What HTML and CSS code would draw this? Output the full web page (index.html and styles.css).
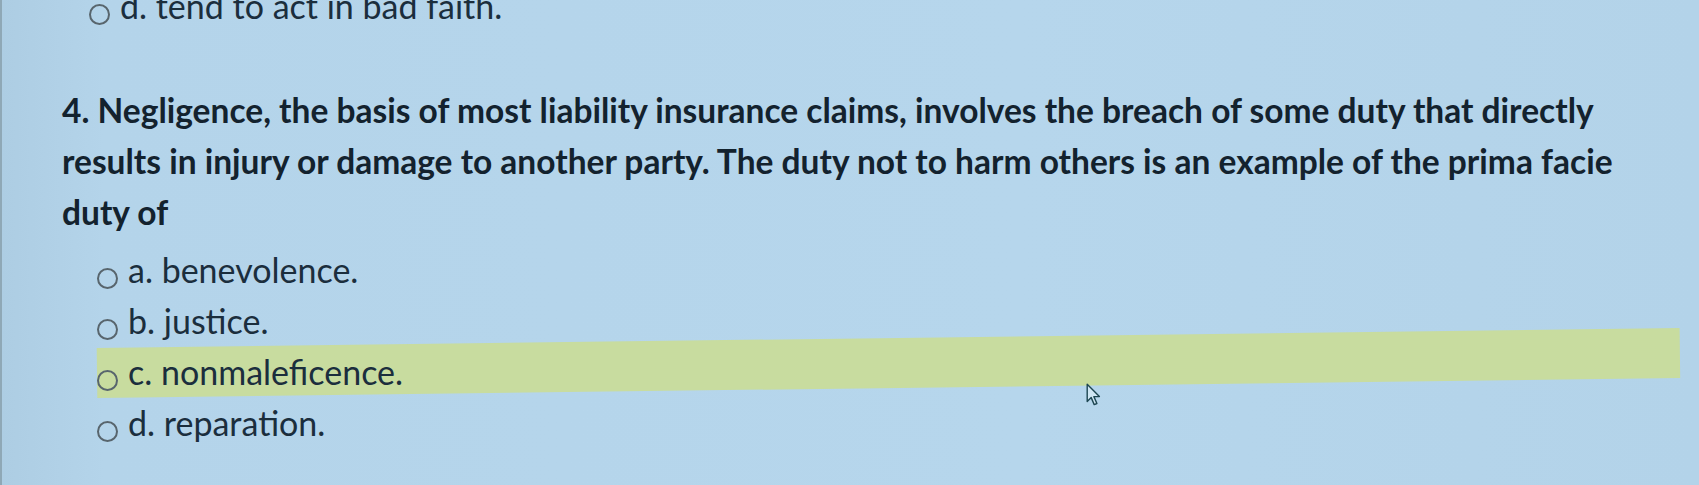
FILE: index.html
```html
<!DOCTYPE html>
<html lang="en">
<head>
<meta charset="utf-8">
<title>Question 4</title>
<link rel="stylesheet" href="styles.css">
</head>
<body>
<div class="screen">
  <div class="prev">
    <div class="opt prev-opt"><span class="radio"></span><span class="label">d. tend to act in bad faith.</span></div>
  </div>
  <div class="question">
    <p class="stem">4. Negligence, the basis of most liability insurance claims, involves the breach of some duty that directly results in injury or damage to another party. The duty not to harm others is an example of the prima facie duty of</p>
    <ul class="options">
      <li class="opt"><span class="radio"></span><span class="label">a. benevolence.</span></li>
      <li class="opt"><span class="radio"></span><span class="label">b. justice.</span></li>
      <li class="opt selected"><span class="radio"></span><span class="label">c. nonmaleficence.</span></li>
      <li class="opt"><span class="radio"></span><span class="label">d. reparation.</span></li>
    </ul>
  </div>
  <svg class="cursor" width="15" height="23" viewBox="0 0 15 23" aria-hidden="true">
    <path d="M1.2 1.2 V18.5 L5.2 14.6 L8.2 21.6 L10.9 20.5 L7.9 13.6 H13.4 Z" fill="#cfe6f3" stroke="#1d4652" stroke-width="1.4" stroke-linejoin="round"/>
  </svg>
</div>
</body>
</html>
```
FILE: styles.css
```css
html, body {
  margin: 0;
  padding: 0;
}
body {
  background: #b4d4ea;
  font-family: Lato, "Open Sans", "Liberation Sans", sans-serif;
}
.screen {
  position: relative;
  height: 485px;
  overflow: hidden;
  box-sizing: border-box;
  border-left: 2px solid #8fa8b6;
  background: linear-gradient(90deg, #adcde3 0%, #b4d4ea 6%, #b6d6ec 60%, #b3d3e9 100%);
}
.prev {
  margin-top: -20px;
  padding-left: 87px;
}
.opt {
  display: flex;
  align-items: flex-start;
  height: 51px;
  font-size: 34px;
  line-height: 51px;
  color: #1b2e3d;
  white-space: nowrap;
}
.radio {
  flex: none;
  width: 21px;
  height: 21px;
  box-sizing: border-box;
  border: 2.6px solid #58656d;
  border-radius: 50%;
  margin-top: 24px;
  margin-right: 10px;
}
.stem {
  margin: 54px 0 0 60px;
  width: 1610px;
  font-weight: 700;
  font-size: 33.5px;
  line-height: 51px;
  color: #13222e;
}
.options {
  list-style: none;
  margin: 6px 0 0;
  padding: 0 0 0 95px;
}
.options .opt {
  width: 1583px;
}
.selected {
  position: relative;
  z-index: 0;
}
.selected::before {
  content: "";
  position: absolute;
  top: 2px;
  bottom: -1px;
  left: 0;
  right: 0;
  z-index: -1;
  background: #c8dc9f;
  transform: rotate(-0.72deg);
  transform-origin: left center;
}
.cursor {
  position: absolute;
  left: 1084px;
  top: 383px;
}
```
